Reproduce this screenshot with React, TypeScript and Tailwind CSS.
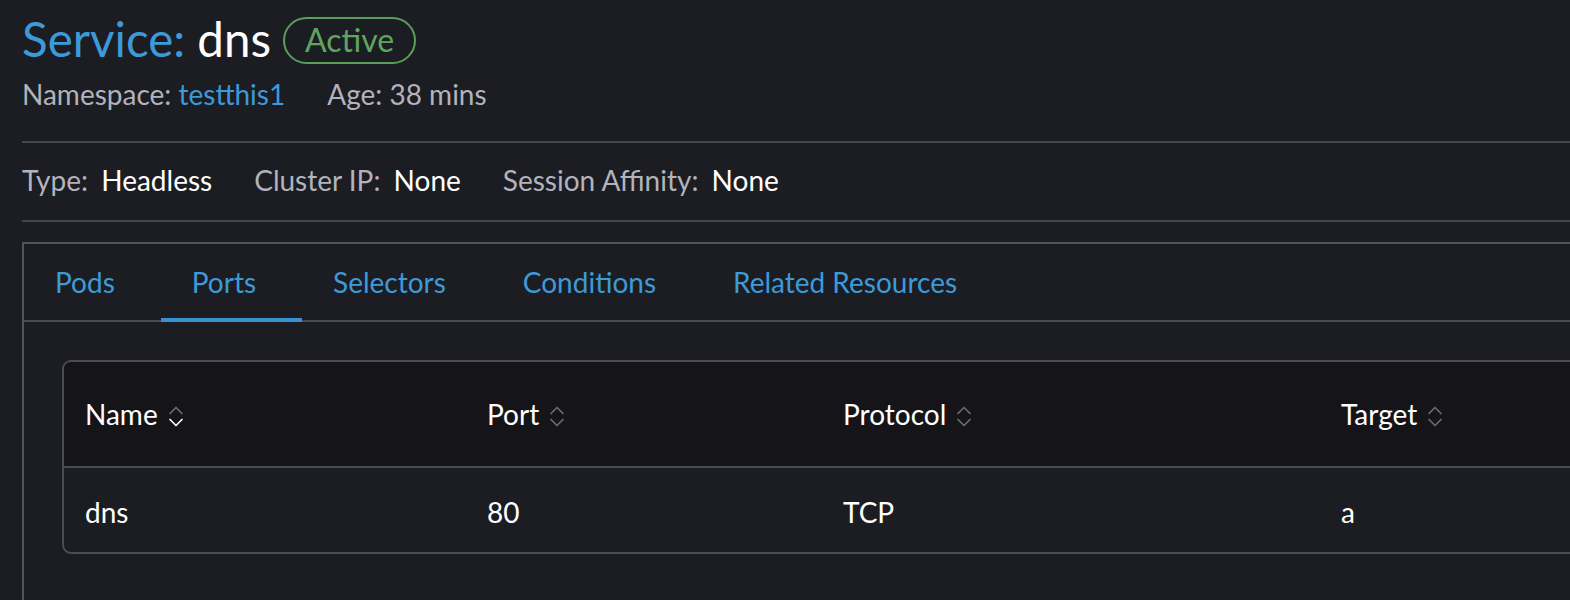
import * as React from "react";

type Row = { name: string; port: string; protocol: string; target: string };

const rows: Row[] = [{ name: "dns", port: "80", protocol: "TCP", target: "a" }];

const tabs = ["Pods", "Ports", "Selectors", "Conditions", "Related Resources"];

function SortIcon({ active }: { active?: boolean }) {
  return (
    <svg width="16" height="24" viewBox="0 0 16 24" fill="none" strokeWidth="1.7" strokeLinecap="round" strokeLinejoin="round" className="ml-[10px] mt-[4px]">
      <path d="M2 9.5 8 3.5l6 6" stroke="#6b6b73" />
      <path d="M2 15.5l6 6 6-6" stroke={active ? "#ffffff" : "#6b6b73"} />
    </svg>
  );
}

export default function App() {
  const [tab, setTab] = React.useState("Ports");

  return (
    <div className="min-h-screen w-full overflow-hidden bg-[#1c1d22] font-['Lato','Noto_Sans',sans-serif] text-white">
      <div className="w-[1640px] pl-[22px]">
        {/* header */}
        <div className="flex items-center gap-[12px] pt-[9px]">
          <h1 className="text-[47.5px] leading-[60px]">
            <span className="text-[#3d9ad9]">Service:</span> <span className="text-white">dns</span>
          </h1>
          <span className="mt-[2px] flex h-[47px] items-center rounded-full border-2 border-[#5a9e5a] px-[20px] text-[32px] text-[#5fa55f]">
            Active
          </span>
        </div>
        <div className="mt-[9px] flex gap-[42px] text-[28px] leading-[32px] text-[#b3b3bd]">
          <span>
            Namespace: <span className="text-[#3d9ad9]">testthis1</span>
          </span>
          <span>Age: 38 mins</span>
        </div>

        <div className="mt-[31px] border-t-2 border-[#45454c]" />
        <div className="flex h-[77px] items-center gap-[42px] pb-[3px] text-[28px]">
          <span>
            <span className="text-[#b3b3bd]">Type:</span> <span className="ml-[6px]">Headless</span>
          </span>
          <span>
            <span className="text-[#b3b3bd]">Cluster IP:</span> <span className="ml-[6px]">None</span>
          </span>
          <span>
            <span className="text-[#b3b3bd]">Session Affinity:</span> <span className="ml-[6px]">None</span>
          </span>
        </div>
        <div className="border-t-2 border-[#45454c]" />

        {/* tabs */}
        <div className="mt-[20px] border-l-2 border-t-2 border-[#54545b] pb-[60px]">
          <div className="flex h-[78px] items-stretch border-b-2 border-[#4a4a51]">
            {tabs.map((t) => (
              <button
                key={t}
                onClick={() => setTab(t)}
                className="relative flex items-center pl-[31px] pr-[46px] text-[28px] text-[#3d9ad9]"
              >
                {t}
                {t === tab && <span className="absolute inset-x-0 -bottom-[2px] h-[4px] bg-[#3a91cf]" />}
              </button>
            ))}
          </div>

          <div className="pl-[38px] pt-[38px]">
            <div className="w-[1560px] overflow-hidden rounded-[9px] border-2 border-[#4c4c53] text-[28px]">
              <div className="grid h-[106px] grid-cols-[402px_356px_498px_1fr] items-center border-b-2 border-[#4c4c53] bg-[#151519]">
                <div className="flex items-center pl-[21px]">Name<SortIcon active /></div>
                <div className="flex items-center pl-[21px]">Port<SortIcon /></div>
                <div className="flex items-center pl-[21px]">Protocol<SortIcon /></div>
                <div className="flex items-center pl-[21px]">Target<SortIcon /></div>
              </div>
              {rows.map((r) => (
                <div key={r.name} className="grid h-[84px] grid-cols-[402px_356px_498px_1fr] items-center pt-[4px]">
                  <div className="pl-[21px]">{r.name}</div>
                  <div className="pl-[21px]">{r.port}</div>
                  <div className="pl-[21px]">{r.protocol}</div>
                  <div className="pl-[21px]">{r.target}</div>
                </div>
              ))}
            </div>
          </div>
        </div>
      </div>
    </div>
  );
}
